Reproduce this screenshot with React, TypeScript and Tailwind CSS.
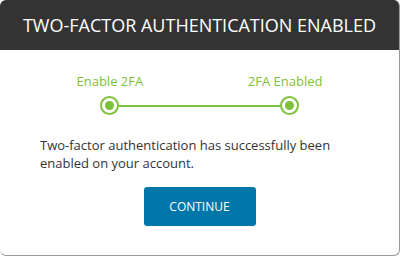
export default function App() {
  return (
    <div className="w-[401px] h-[256px] bg-white" style={{ fontFamily: "'Open Sans', sans-serif" }}>
      <div className="w-[400px] h-[256px] flex flex-col rounded-md border-r border-b border-[#9a9a9a] overflow-hidden">
        {/* Header */}
        <div className="h-[50px] bg-[#333333] flex items-center justify-center">
          <h1 className="text-white text-[18px] leading-none">TWO-FACTOR AUTHENTICATION ENABLED</h1>
        </div>

        {/* Steps */}
        <div className="pt-[23px] flex flex-col items-center">
          <div className="w-[246px] flex justify-between text-[13px] leading-[17px] text-[#7dc13a]">
            <span>Enable 2FA</span>
            <span>2FA Enabled</span>
          </div>
          <div className="mt-[6px] w-[199px] flex items-center">
            <div className="w-[19px] h-[19px] rounded-full border-[2.5px] border-[#7dc13a] flex items-center justify-center shrink-0">
              <div className="w-[9px] h-[9px] rounded-full bg-[#7dc13a]" />
            </div>
            <div className="flex-1 h-[2px] bg-[#7dc13a]" />
            <div className="w-[19px] h-[19px] rounded-full border-[2.5px] border-[#7dc13a] flex items-center justify-center shrink-0">
              <div className="w-[9px] h-[9px] rounded-full bg-[#7dc13a]" />
            </div>
          </div>
        </div>

        {/* Message */}
        <p className="mt-[21px] px-[40px] text-[13px] leading-[18px] text-[#333333]">
          Two-factor authentication has successfully been enabled on your account.
        </p>

        <div className="mt-[15px] flex justify-center">
          <button className="w-[112px] h-[39px] rounded-[3px] bg-[#0077a8] text-white text-[12px] font-medium">
            CONTINUE
          </button>
        </div>
      </div>
    </div>
  );
}
